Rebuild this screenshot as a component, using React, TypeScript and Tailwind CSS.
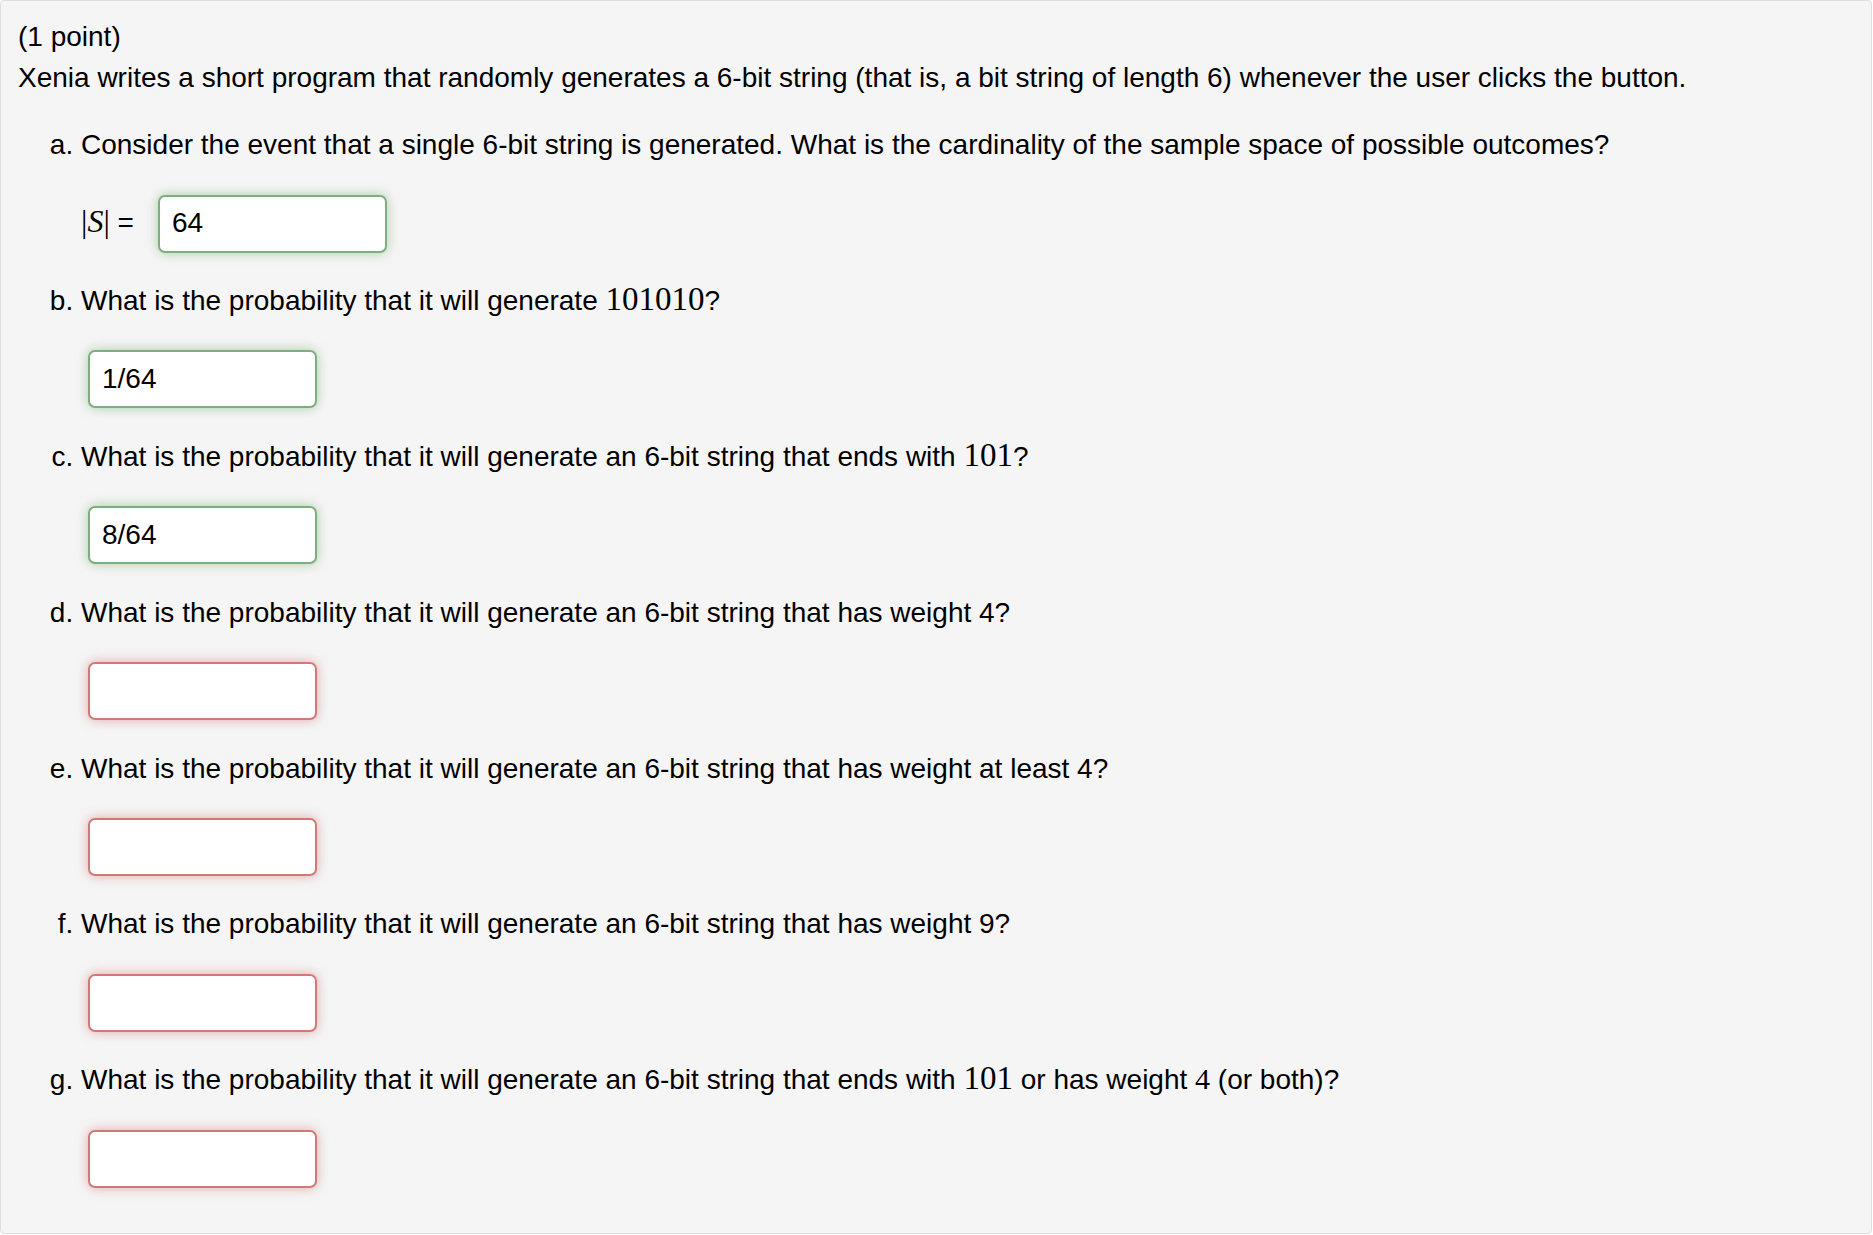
import React from "react";

const sans = { fontFamily: '"Liberation Sans", Arial, sans-serif' };

function Box({ value, ok, extraClass }: { value?: string; ok: boolean; extraClass?: string }) {
  return (
    <div
      className={
        "h-[58px] w-[229px] rounded-[7px] border-2 bg-white pl-[12px] flex items-center text-[28px] text-black " +
        (ok
          ? "border-[#7dae7d] shadow-[0_0_12px_rgba(110,170,110,0.55)] "
          : "border-[#d07a78] shadow-[0_0_12px_rgba(210,110,110,0.55)] ") +
        (extraClass ?? "")
      }
    >
      {value ?? ""}
    </div>
  );
}

function M({ children }: { children: React.ReactNode }) {
  return (
    <span className="text-[33px] leading-none" style={{ fontFamily: '"Liberation Serif", "Times New Roman", serif' }}>
      {children}
    </span>
  );
}

const questions: { label: React.ReactNode; value?: string; ok: boolean }[] = [
  {
    label: <>What is the probability that it will generate <M>101010</M>?</>,
    value: "1/64",
    ok: true,
  },
  {
    label: <>What is the probability that it will generate an 6-bit string that ends with <M>101</M>?</>,
    value: "8/64",
    ok: true,
  },
  { label: <>What is the probability that it will generate an 6-bit string that has weight 4?</>, ok: false },
  { label: <>What is the probability that it will generate an 6-bit string that has weight at least 4?</>, ok: false },
  { label: <>What is the probability that it will generate an 6-bit string that has weight 9?</>, ok: false },
  {
    label: (
      <>
        What is the probability that it will generate an 6-bit string that ends with <M>101</M> or has weight{" "}
        <span className="text-[30px] leading-none" style={{ fontFamily: '"Liberation Serif", serif' }}>4</span> (or both)?
      </>
    ),
    ok: false,
  },
];

export default function App() {
  return (
    <div className="bg-white w-[1873px] h-[1235px]" style={sans}>
      <div className="w-[1872px] h-[1234px] rounded-[4px] border border-[#dedede] bg-[#f5f5f5] pt-[16px] pl-[17px] text-[28px] leading-[40.5px] text-black">
        <div>(1 point)</div>
        <div>
          Xenia writes a short program that randomly generates a 6-bit string (that is, a bit string of length 6)
          whenever the user clicks the button.
        </div>
        <ol className="list-[lower-alpha] pl-[63px] mt-[27px]">
          <li className="mb-[28.4px]">
            <div>Consider the event that a single 6-bit string is generated. What is the cardinality of the sample space of possible outcomes?</div>
            <div className="mt-[29px] flex items-center">
              <span className="w-[77px]">
                <span style={{ fontFamily: '"Liberation Serif", serif' }} className="text-[32px] leading-none">
                  |<i>S</i>|
                </span>{" "}
                =
              </span>
              <Box value="64" ok={true} />
            </div>
          </li>
          {questions.map((q, i) => (
            <li key={i} className="mb-[28.4px]">
              <div>{q.label}</div>
              <div className="mt-[29px] flex items-center">
                <Box value={q.value} ok={q.ok} extraClass="ml-[7px]" />
              </div>
            </li>
          ))}
        </ol>
      </div>
    </div>
  );
}
